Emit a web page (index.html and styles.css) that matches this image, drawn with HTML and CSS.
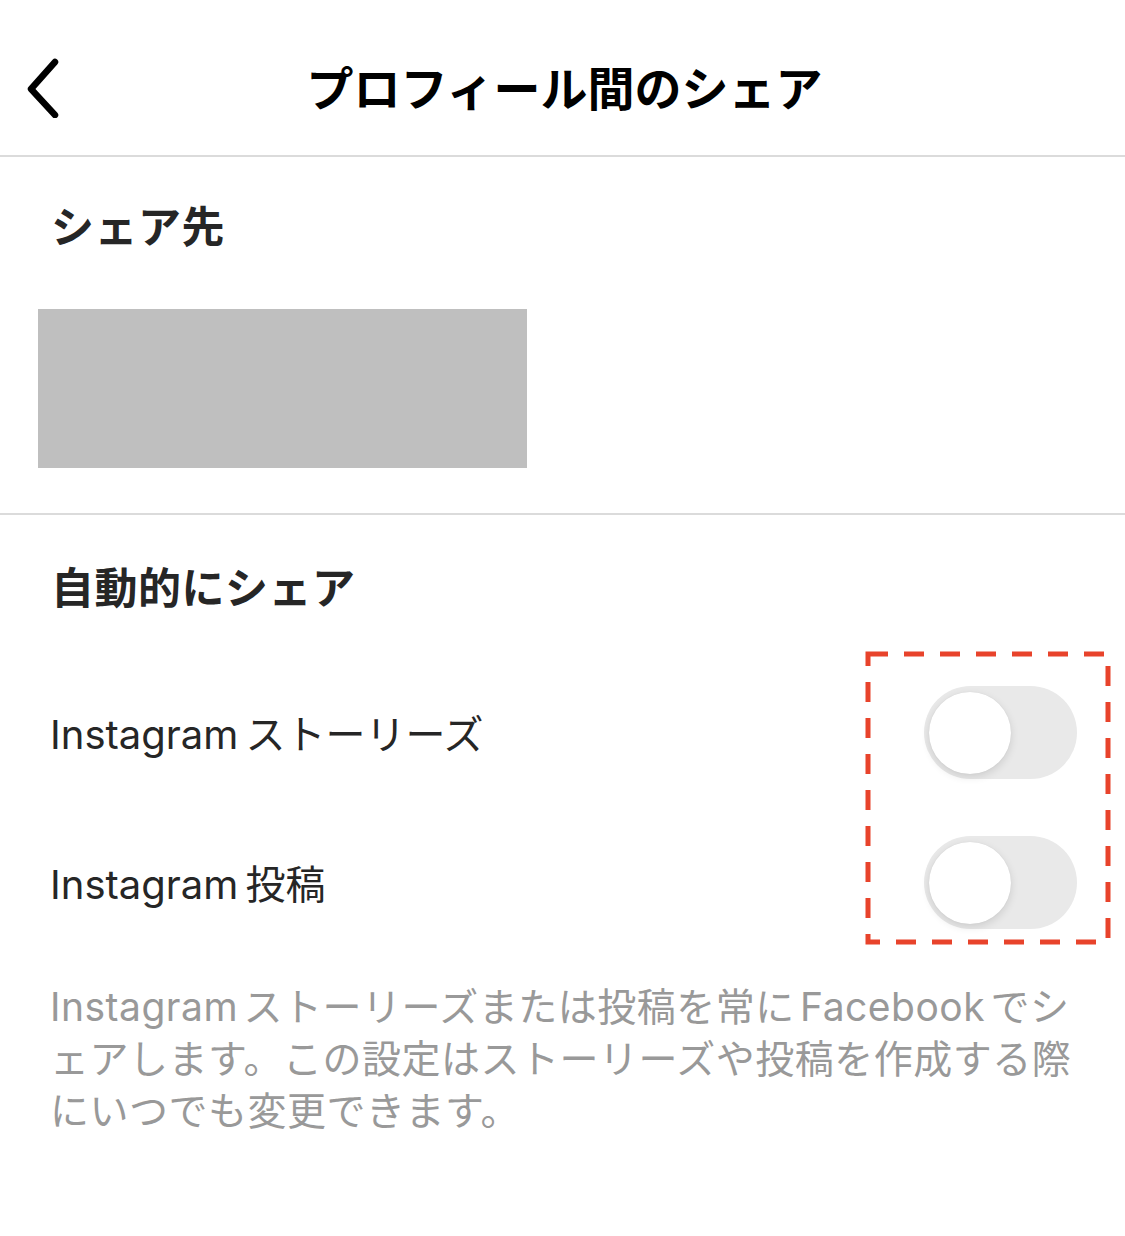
FILE: index.html
```html
<!DOCTYPE html>
<html lang="ja">
<head>
  <meta charset="UTF-8">
  <title>プロフィール間のシェア</title>
  <link rel="stylesheet" href="styles.css">
</head>
<body>

  <div class="screen">
    <header class="topbar">
      <button class="back" aria-label="戻る">
        <svg width="40" height="60" viewBox="0 0 40 60">
          <path d="M33 4 L9 31 L33 57" fill="none" stroke="#000" stroke-width="6.5" stroke-linecap="round" stroke-linejoin="round"/>
        </svg>
      </button>
      <h1 class="title">プロフィール間のシェア</h1>
    </header>

    <section class="section target">
      <h2 class="section-title">シェア先</h2>
      <div class="account-placeholder"></div>
    </section>

    <section class="section auto">
      <h2 class="section-title">自動的にシェア</h2>

      <div class="toggle-list">
        <div class="row">
          <span class="row-label">Instagram ストーリーズ</span>
          <label class="switch">
            <input type="checkbox">
            <span class="knob"></span>
          </label>
        </div>
        <div class="row">
          <span class="row-label">Instagram 投稿</span>
          <label class="switch">
            <input type="checkbox">
            <span class="knob"></span>
          </label>
        </div>

        <!-- red dashed highlight around the switches -->
        <svg class="highlight" width="247" height="295" viewBox="0 0 247 295">
          <rect x="3" y="3" width="240" height="288" fill="none" stroke="#e8432b" stroke-width="5" stroke-dasharray="20 16"/>
        </svg>
      </div>

      <p class="note">Instagram ストーリーズまたは投稿を常に Facebook でシ<br>ェアします。この設定はストーリーズや投稿を作成する際<br>にいつでも変更できます。</p>
    </section>
  </div>

</body>
</html>
```

FILE: styles.css
```css
body {
  margin: 0;
  background: #fff;
  font-family: "Inter", "Noto Sans CJK JP", sans-serif;
  color: #262626;
}

.screen {
  width: 1125px;
  min-height: 1236px;
}

.topbar {
  height: 155px;
  border-bottom: 2px solid #dbdbdb;
  display: flex;
  align-items: center;
  justify-content: center;
  position: relative;
}

.back {
  position: absolute;
  left: 22px;
  top: 58px;
  padding: 0;
  border: none;
  background: none;
  line-height: 0;
}

.title {
  margin: 16px 0 0;
  font-family: "Noto Sans CJK JP", sans-serif;
  font-size: 47px;
  font-weight: 700;
  color: #000;
  transform: translateX(2px);
}

.section {
  padding: 0 38px;
}

.target {
  padding-top: 37px;
  padding-bottom: 45px;
  border-bottom: 2px solid #dbdbdb;
}

.section-title {
  margin: 0 0 0 13px;
  font-family: "Noto Sans CJK JP", sans-serif;
  font-size: 43px;
  font-weight: 700;
  line-height: 60px;
  color: #262626;
  letter-spacing: 0.5px;
}

.account-placeholder {
  margin-top: 55px;
  width: 489px;
  height: 159px;
  background: #bfbfbf;
}

.auto {
  padding-top: 40px;
}

.toggle-list {
  position: relative;
  margin-top: 42px;
}

.row {
  height: 150px;
  display: flex;
  align-items: center;
  justify-content: space-between;
  padding-left: 12px;
}

.row-label {
  font-size: 40px;
  color: #262626;
  word-spacing: -4px;
}

.switch {
  position: relative;
  width: 153px;
  height: 93px;
  margin-right: 10px;
}

.switch input {
  display: none;
}

.knob {
  display: block;
  width: 100%;
  height: 100%;
  border-radius: 47px;
  background: #e9e9e9;
}

.knob::before {
  content: "";
  position: absolute;
  left: 5px;
  top: 6px;
  width: 82px;
  height: 82px;
  border-radius: 50%;
  background: #fff;
  box-shadow: 0 3px 8px rgba(0, 0, 0, 0.12), 0 0 1px rgba(0, 0, 0, 0.1);
}

.highlight {
  position: absolute;
  left: 827px;
  top: -6px;
}

.note {
  margin: 24px 0 0 12px;
  font-size: 39px;
  line-height: 52px;
  color: #999;
  letter-spacing: 0.5px;
  word-spacing: -6px;
}
```
